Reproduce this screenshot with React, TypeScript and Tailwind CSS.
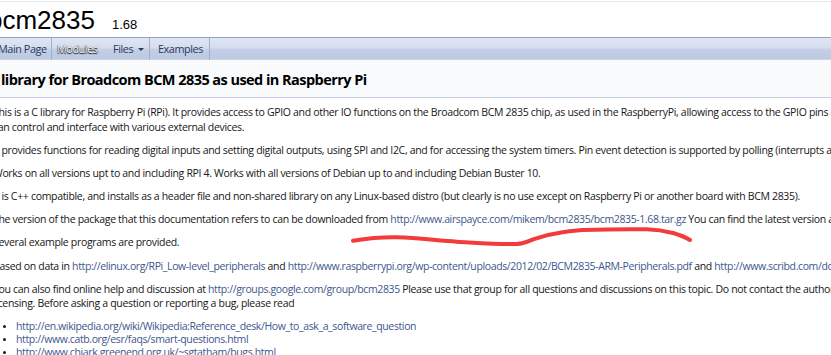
const link = "text-[#3d578c] tracking-[-0.38px]";

function Para({ children }: { children: React.ReactNode }) {
  return <p className="mt-[9.1px] whitespace-nowrap leading-[14px]">{children}</p>;
}

function Tab({
  label,
  className,
  active,
  arrow,
}: {
  label: string;
  className: string;
  active?: boolean;
  arrow?: boolean;
}) {
  return (
    <div
      className={`flex h-full shrink-0 items-center whitespace-nowrap ${className} ${
        active
          ? "text-white [text-shadow:0_1px_1px_rgba(0,0,0,1),0_0_1px_rgba(0,0,0,0.8)]"
          : "text-[#283a5d]"
      }`}
    >
      {label}
      {arrow && (
        <span className="ml-[5px] inline-block h-0 w-0 border-x-[3px] border-t-[3px] border-x-transparent border-t-[#283a5d]" />
      )}
    </div>
  );
}

export default function App() {
  return (
    <div className="relative h-[355px] w-[831px] overflow-hidden bg-white font-['Open_Sans','Noto_Sans',sans-serif] text-[10.5px] tracking-[-0.32px] text-[#161616]">
      {/* title area */}
      <div className="mt-px h-[36px] border-t border-[#e8e8e8] pt-[3px]">
        <div className="-ml-[12px] flex h-[30px] items-baseline whitespace-nowrap font-['Liberation_Sans',Arial,sans-serif] tracking-normal text-[#000]">
          <span className="text-[26px] leading-[30px]">bcm2835</span>
          <span className="ml-[17px] text-[13px] leading-[30px]">1.68</span>
        </div>
      </div>

      {/* tabs */}
      <div className="box-border h-[23px] border-t border-[#8fa0c8] bg-[linear-gradient(to_bottom,#e0e6f2_0%,#d4dcee_45%,#c4cee6_52%,#bdc9e2_92%,#d0d8eb_100%)]">
        <div className="-ml-[10px] flex h-full text-[10.8px] tracking-[-0.4px]">
          <Tab label="Main Page" className="w-[62px] border-r border-[#9fb0d4] pl-[8px]" />
          <Tab label="Modules" className="w-[55px] pl-[5px]" active />
          <Tab label="Files" className="w-[43px] border-r border-[#9fb0d4] pl-[6px]" arrow />
          <Tab label="Examples" className="w-[60px] border-r border-[#9fb0d4] pl-[8px]" />
        </div>
      </div>

      {/* header */}
      <div className="h-[38px] border-b border-[#c4cfe5] bg-[#f9fafc] pt-[3px]">
        <div className="-ml-[11px] flex h-full items-center whitespace-nowrap text-[14.5px] font-bold tracking-[-0.55px] text-[#000]">
          C library for Broadcom BCM 2835 as used in Raspberry Pi
        </div>
      </div>

      {/* contents */}
      <div className="-ml-[7px] pt-[7px]">
        <p className="whitespace-nowrap leading-[14.5px]">
          This is a C library for Raspberry Pi (RPi). It provides access to GPIO and other IO functions on the
          Broadcom BCM 2835 chip, as used in the RaspberryPi, allowing access to the GPIO pins on the 26 pin IDE
          plug on the RPi board so you
          <br />
          can control and interface with various external devices.
        </p>
        <Para>
          It provides functions for reading digital inputs and setting digital outputs, using SPI and I2C, and for
          accessing the system timers. Pin event detection is supported by polling (interrupts are not supported).
        </Para>
        <Para>
          Works on all versions upt to and including RPI 4. Works with all versions of Debian up to and including
          Debian Buster 10.
        </Para>
        <Para>
          It is C++ compatible, and installs as a header file and non-shared library on any Linux-based distro (but
          clearly is no use except on Raspberry Pi or another board with BCM 2835).
        </Para>
        <Para>
          The version of the package that this documentation refers to can be downloaded from{" "}
          <span className={link}>http://www.airspayce.com/mikem/bcm2835/bcm2835-1.68.tar.gz</span> You can find
          the latest version at <span className={link}>http://www.airspayce.com/mikem/bcm2835</span>
        </Para>
        <Para>Several example programs are provided.</Para>
        <Para>
          Based on data in <span className={link}>http://elinux.org/RPi_Low-level_peripherals</span> and{" "}
          <span className={link}>http://www.raspberrypi.org/wp-content/uploads/2012/02/BCM2835-ARM-Peripherals.pdf</span>{" "}
          and <span className={link}>http://www.scribd.com/doc/101830961/GPIO-Pads-Control2</span>
        </Para>
        <Para>
          You can also find online help and discussion at{" "}
          <span className={link}>http://groups.google.com/group/bcm2835</span> Please use that group for all
          questions and discussions on this topic. Do not contact the author directly, unless it is to discuss
          commercial
          <br />
          licensing. Before asking a question or reporting a bug, please read
        </Para>
        <ul className="mt-[10px]">
          {[
            "http://en.wikipedia.org/wiki/Wikipedia:Reference_desk/How_to_ask_a_software_question",
            "http://www.catb.org/esr/faqs/smart-questions.html",
            "http://www.chiark.greenend.org.uk/~sgtatham/bugs.html",
          ].map((u) => (
            <li key={u} className="flex h-[13px] items-center whitespace-nowrap pl-[10px] leading-[13px]">
              <span className="h-[3px] w-[3px] shrink-0 rounded-full bg-[#1c1c1c]" />
              <span className={`ml-[10px] ${link}`}>{u}</span>
            </li>
          ))}
        </ul>
      </div>

      {/* red pen annotation over the download link */}
      <svg className="pointer-events-none absolute left-0 top-0" width="831" height="355" viewBox="0 0 831 355">
        <path
          d="M353 240.7 C370 238 385 237 397 237.3 C420 238 440 241 456.7 241.7 C480 243 500 244.5 516.7 244 C524 243.5 528 241.5 533 239.3 C542 236 550 234 560 232.7 C568 231.5 575 230.3 583 230 C605 229.3 625 229 646.7 229.3 C657 229.6 665 231 673 233 C680 235 686 237.5 690 240"
          fill="none"
          stroke="#f23b3b"
          strokeWidth="4"
          strokeLinecap="round"
          strokeLinejoin="round"
        />
      </svg>
    </div>
  );
}
